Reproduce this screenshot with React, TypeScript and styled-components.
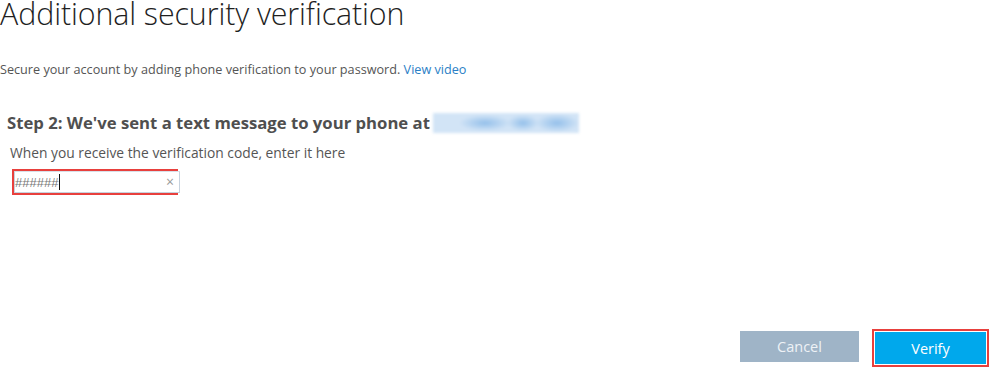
import styled, { createGlobalStyle } from 'styled-components';

const GlobalStyle = createGlobalStyle`
  html, body {
    margin: 0;
    padding: 0;
    background: #fff;
  }
  body {
    font-family: 'Open Sans', 'Noto Sans', 'Liberation Sans', sans-serif;
  }
`;

const Page = styled.div`
  display: flex;
  flex-direction: column;
  height: 367px;
  box-sizing: border-box;
  overflow: hidden;
`;

const Title = styled.h1`
  margin: 0;
  font-size: 30.4px;
  font-weight: 300;
  line-height: 27px;
  color: #1f1f1f;
  letter-spacing: -0.1px;
`;

const Intro = styled.p`
  margin: 33px 0 0 0;
  font-size: 12.65px;
  line-height: 18px;
  color: #555;
`;

const Link = styled.a`
  color: #2a80c6;
  text-decoration: none;
`;

const Step = styled.section`
  display: flex;
  flex-direction: column;
  margin-top: 34px;
  padding-left: 7px;
`;

const StepTitle = styled.h2`
  display: flex;
  align-items: center;
  gap: 3px;
  margin: 0;
  font-size: 16.7px;
  font-weight: 700;
  line-height: 22px;
  color: #4f4f4f;
`;

const Blurred = styled.span`
  display: inline-block;
  width: 146px;
  height: 20px;
  background:
    radial-gradient(ellipse 26px 8px at 52px 10px, #93bfea 0%, transparent 100%),
    radial-gradient(ellipse 16px 8px at 90px 10px, #93bfea 0%, transparent 100%),
    radial-gradient(ellipse 22px 9px at 124px 10px, #93bfea 0%, transparent 100%),
    #d2e4f6;
  filter: blur(1.5px);
`;

const Hint = styled.p`
  margin: 10px 0 0 3px;
  font-size: 13.8px;
  line-height: 18px;
  color: #555;
`;

const Highlight = styled.div`
  display: inline-flex;
  align-self: flex-start;
  margin: 7px 0 0 5px;
  border: 2px solid #e8403d;
`;

const Field = styled.div`
  display: flex;
  align-items: center;
  width: 166px;
  height: 22px;
  margin-right: -4px;
  border: 1px solid #c6d2de;
  border-top-color: #d8e0e8;
  background: #fff;
  box-sizing: border-box;
  padding: 0 5px 0 0;
`;

const Code = styled.span`
  font-family: 'Liberation Sans', Arial, sans-serif;
  font-size: 13px;
  color: #777;
`;

const Caret = styled.span`
  width: 1px;
  height: 16px;
  margin-left: 1px;
  background: #111;
`;

const Clear = styled.span`
  margin-left: auto;
  font-size: 14px;
  line-height: 1;
  color: #9a9a9a;
`;

const Footer = styled.div`
  display: flex;
  justify-content: flex-end;
  align-items: center;
  gap: 13px;
  margin-top: auto;
`;

const Button = styled.button<{ $primary?: boolean }>`
  width: ${({ $primary }) => ($primary ? '117px' : '119px')};
  height: ${({ $primary }) => ($primary ? '38px' : '31px')};
  margin-bottom: ${({ $primary }) => ($primary ? '0' : '4px')};
  border: ${({ $primary }) => ($primary ? '2px solid #e8403d' : 'none')};
  box-shadow: ${({ $primary }) => ($primary ? 'inset 0 0 0 1px #fff' : 'none')};
  background: ${({ $primary }) => ($primary ? '#00a8ec' : '#9fb4c7')};
  color: ${({ $primary }) => ($primary ? '#fff' : '#eef2f6')};
  font-family: 'Open Sans', 'Noto Sans', sans-serif;
  font-size: 14.5px;
  padding: 0;
  cursor: pointer;
  box-sizing: border-box;
`;

export default function App() {
  return (
    <>
      <GlobalStyle />
      <Page>
        <Title>Additional security verification</Title>
        <Intro>
          Secure your account by adding phone verification to your password. <Link href="#">View video</Link>
        </Intro>
        <Step>
          <StepTitle>
            Step 2: We've sent a text message to your phone at <Blurred />
          </StepTitle>
          <Hint>When you receive the verification code, enter it here</Hint>
          <Highlight>
            <Field>
              <Code>######</Code>
              <Caret />
              <Clear>×</Clear>
            </Field>
          </Highlight>
        </Step>
        <Footer>
          <Button>Cancel</Button>
          <Button $primary>Verify</Button>
        </Footer>
      </Page>
    </>
  );
}
